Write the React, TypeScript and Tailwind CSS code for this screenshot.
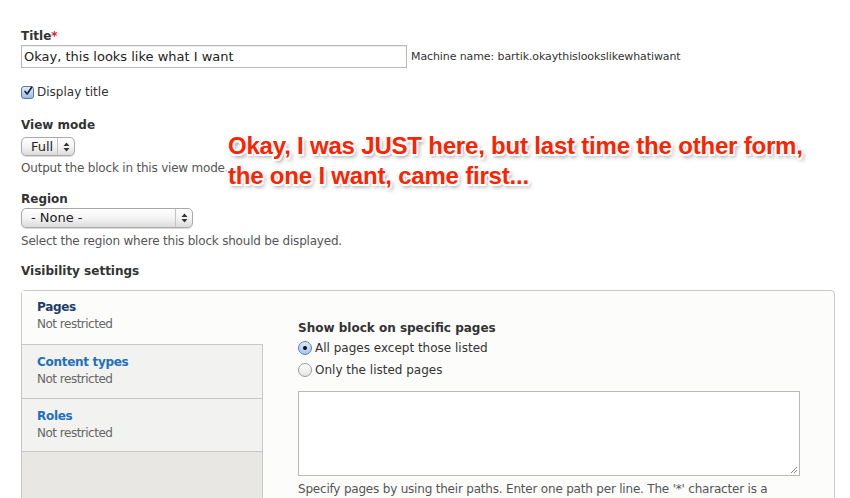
const SelectArrows = () => (
  <svg width="7" height="10" viewBox="0 0 7 10">
    <path d="M3.5 0.5 L6.5 4 L0.5 4 Z" fill="#333" />
    <path d="M3.5 9.5 L6.5 6 L0.5 6 Z" fill="#333" />
  </svg>
);

const Select = ({ label, width, height }: { label: string; width: string; height: string }) => (
  <div
    className={`flex items-stretch ${width} ${height} rounded-[5px] border border-[#a9a9a9] bg-gradient-to-b from-white via-[#f4f4f4] to-[#dcdcdc] shadow-[0_1px_1px_rgba(0,0,0,0.15)]`}
  >
    <div className="flex-1 flex items-center pl-[9px] text-[13px] text-[#222]">{label}</div>
    <div className="w-[17px] border-l border-[#c4c4c4] flex items-center justify-center">
      <SelectArrows />
    </div>
  </div>
);

const Radio = ({ checked }: { checked?: boolean }) => (
  <span
    className={`w-[14px] h-[14px] rounded-full border flex items-center justify-center shrink-0 ${
      checked
        ? "border-[#5a7fb5] bg-gradient-to-b from-[#dbe8f8] to-[#a9c6ec]"
        : "border-[#9a9a9a] bg-gradient-to-b from-white to-[#e3e3e3]"
    }`}
  >
    {checked && <span className="w-[4px] h-[4px] rounded-full bg-[#111]" />}
  </span>
);

const Tab = ({ title, active, last }: { title: string; active?: boolean; last?: boolean }) => (
  <div
    className={`pl-[15px] ${
      active
        ? "h-[53px] pt-[8px] bg-[#fcfcfb]"
        : `h-[54px] pt-[9px] bg-[#f2f2f0] border-r border-t border-[#c8c8c6] ${last ? "border-b" : ""}`
    }`}
  >
    <div className={`text-[12px] font-bold leading-[17px] tracking-[-0.3px] ${active ? "text-[#1c3d6b]" : "text-[#1f6fbd]"}`}>
      {title}
    </div>
    <div className="text-[12px] leading-[16px] tracking-[-0.5px] text-[#666]">Not restricted</div>
  </div>
);

export default function App() {
  return (
    <div className="relative h-[498px] overflow-hidden bg-white font-['DejaVu_Sans',sans-serif] text-[#333]">
      <div className="px-[21px] pt-[28px]">
        <div className="text-[12px] font-bold leading-[16px]">
          Title<span className="text-[#e02020]">*</span>
        </div>
        <div className="mt-[1px] flex items-center">
          <div className="w-[386px] h-[23px] border border-[#b8b8b8] shadow-[inset_0_1px_1px_rgba(0,0,0,0.08)] flex items-center pl-[2px] text-[13px] text-[#222]">
            Okay, this looks like what I want
          </div>
          <div className="ml-[4px] mt-[1px] text-[11px] tracking-[-0.1px] text-[#333]">Machine name: bartik.okaythislookslikewhatiwant</div>
        </div>

        <div className="mt-[16px] flex items-center h-[16px] gap-[3px]">
          <span className="w-[13px] h-[13px] rounded-[3px] border border-[#5878ad] bg-gradient-to-b from-[#e2ecf9] to-[#9dbbe6] flex items-center justify-center">
            <svg width="12" height="12" viewBox="0 0 12 12" className="-mt-[2px] ml-[1px]">
              <path d="M2.5 6.5 L5 9.5 L10.5 1.5" stroke="#14223d" strokeWidth="2" fill="none" strokeLinecap="round" strokeLinejoin="round" />
            </svg>
          </span>
          <span className="text-[12px] text-[#333]">Display title</span>
        </div>

        <div className="mt-[17px] text-[12px] font-bold leading-[16px]">View mode</div>
        <div className="mt-[4px]">
          <Select label="Full" width="w-[54px]" height="h-[19px]" />
        </div>
        <div className="mt-[4px] text-[12px] leading-[16px] tracking-[-0.2px] text-[#555]">Output the block in this view mode.</div>

        <div className="mt-[15px] text-[12px] font-bold leading-[16px]">Region</div>
        <div className="mt-[1px]">
          <Select label="- None -" width="w-[172px]" height="h-[20px]" />
        </div>
        <div className="mt-[5px] text-[12px] leading-[16px] tracking-[-0.2px] text-[#555]">Select the region where this block should be displayed.</div>

        <div className="mt-[14px] text-[12px] font-bold leading-[16px]">Visibility settings</div>

        <div className="mt-[11px] w-[814px] border border-[#c8c8c6] rounded-t-[4px] bg-[#fcfcfb] flex h-[260px]">
          <div className="w-[241px] flex flex-col">
            <Tab title="Pages" active />
            <Tab title="Content types" />
            <Tab title="Roles" last />
            <div className="flex-1 bg-[#e8e7e3] border-r border-[#c8c8c6]" />
          </div>
          <div className="flex-1 pl-[35px] pr-[34px] pt-[29px]">
            <div className="text-[12px] font-bold leading-[16px]">Show block on specific pages</div>
            <div className="mt-[4px] flex items-center gap-[3px] h-[16px] text-[12px]">
              <Radio checked /> All pages except those listed
            </div>
            <div className="mt-[6px] flex items-center gap-[3px] h-[16px] text-[12px]">
              <Radio /> Only the listed pages
            </div>
            <div className="mt-[13px] h-[85px] border border-[#b8b8b8] bg-white relative">
              <svg width="8" height="8" viewBox="0 0 8 8" className="absolute right-[1px] bottom-[1px]">
                <path d="M7 1 L1 7 M7 4 L4 7" stroke="#888" strokeWidth="1" />
              </svg>
            </div>
            <div className="mt-[5px] text-[12px] leading-[16px] tracking-[-0.2px] text-[#555]">
              Specify pages by using their paths. Enter one path per line. The '*' character is a wildcard. Example paths are blog for the blog page and blog/* for every personal blog.
            </div>
          </div>
        </div>
      </div>

      <div className="absolute left-[228px] top-[131px] font-['Liberation_Sans',sans-serif] font-bold text-[24px] leading-[30px] tracking-[-0.2px] text-[#ff2200] [text-shadow:1.5px_1.5px_0_#fff,-1.5px_-1.5px_0_#fff,1.5px_-1.5px_0_#fff,-1.5px_1.5px_0_#fff,2px_0_0_#fff,-2px_0_0_#fff,0_2px_0_#fff,0_-2px_0_#fff,2px_3px_4px_rgba(0,0,0,0.5)]">
        <div>Okay, I was JUST here, but last time the other form,</div>
        <div>the one I want, came first...</div>
      </div>
    </div>
  );
}
